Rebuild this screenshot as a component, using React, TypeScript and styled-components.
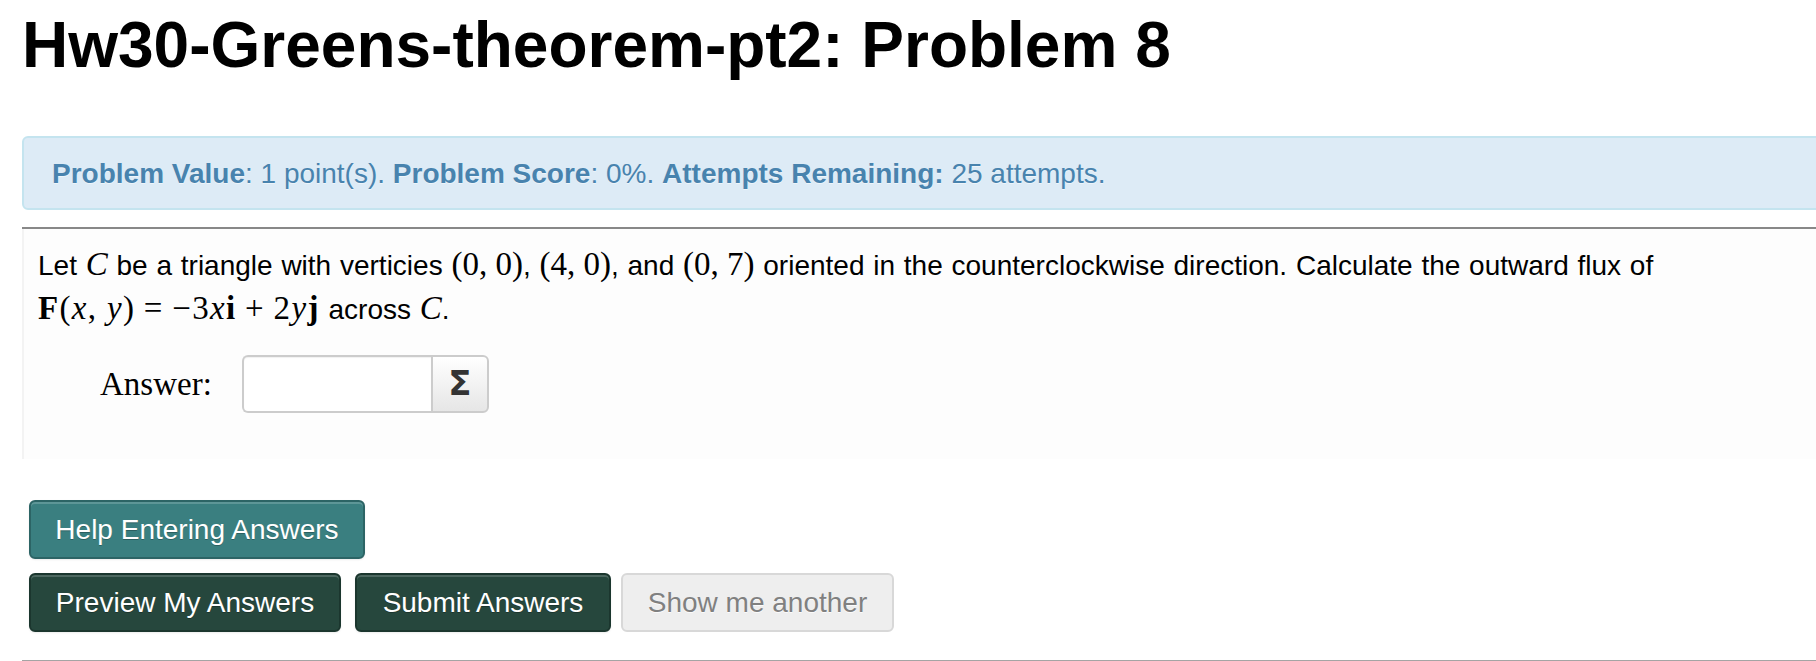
import styled, { createGlobalStyle } from 'styled-components';

const GlobalStyle = createGlobalStyle`
  html, body {
    margin: 0;
    padding: 0;
    background: #fff;
    overflow: hidden;
  }
  body {
    font-family: 'Liberation Sans', Arial, Helvetica, sans-serif;
    color: #000;
  }
`;

const Page = styled.div`
  padding-left: 22px;
  width: 1900px;
`;

const Heading = styled.h1`
  margin: 10px 0 56px;
  font-size: 64px;
  line-height: 70px;
  font-weight: 700;
`;

const Alert = styled.div`
  border: 2px solid #c4e4ef;
  border-radius: 6px;
  background: #ddebf6;
  color: #4883ae;
  padding: 16px 28px 15px;
  font-size: 28px;
  line-height: 39px;
  text-shadow: 0 1px 0 rgba(255, 255, 255, 0.5);
`;

const Rule = styled.hr<{ $light?: boolean }>`
  margin: 17px 0 0;
  border: 0;
  height: 2px;
  background: ${({ $light }) => ($light ? '#a4a4a4' : '#888')};
`;

const ProblemBody = styled.div`
  background: #fdfdfd;
  border-left: 2px solid #f3f3f3;
  padding: 14px 14px 46px;
  font-size: 28px;
  line-height: 42px;
  word-spacing: 1px;
`;

const Math = styled.span<{ $spread?: boolean }>`
  font-family: 'Liberation Serif', 'Times New Roman', serif;
  font-size: 33px;
  word-spacing: 0;
  letter-spacing: ${({ $spread }) => ($spread ? '0.04em' : '0')};
`;

const Var = styled.i`
  font-style: italic;
`;

const Bold = styled.b`
  font-weight: 700;
`;

const Op = styled.span`
  margin: 0 0.26em;
`;

const AnswerRow = styled.div`
  display: flex;
  align-items: center;
  margin-top: 24px;
  padding-left: 62px;
  gap: 30px;
`;

const Label = styled.span`
  font-family: 'Liberation Serif', 'Times New Roman', serif;
  font-size: 33px;
`;

const InputGroup = styled.div`
  display: flex;
  height: 58px;
`;

const Input = styled.input`
  width: 189px;
  box-sizing: border-box;
  border: 2px solid #ccc;
  border-right: 0;
  border-radius: 6px 0 0 6px;
  background: #fff;
  box-shadow: inset 0 1px 1px rgba(0, 0, 0, 0.06);
  outline: none;
`;

const SigmaButton = styled.button`
  width: 58px;
  box-sizing: border-box;
  border: 2px solid #ccc;
  border-radius: 0 6px 6px 0;
  background: linear-gradient(#fff, #e6e6e6);
  font-family: 'DejaVu Sans', sans-serif;
  font-weight: 700;
  font-size: 34px;
  line-height: 1;
  color: #333;
  padding: 0 0 2px;
`;

const Buttons = styled.div`
  padding: 41px 0 0 7px;
  display: flex;
  flex-direction: column;
  gap: 14px;
  margin-bottom: 28px;
`;

const ButtonRow = styled.div`
  display: flex;
  gap: 14px;
`;

type Variant = 'help' | 'primary' | 'disabled';

const palette: Record<Variant, { bg: string; border: string; color: string; shadow: string }> = {
  help: { bg: '#3a7f80', border: '#2c6465', color: '#fff', shadow: 'rgba(0,0,0,0.25)' },
  primary: { bg: '#26473d', border: '#1b362e', color: '#fff', shadow: 'rgba(0,0,0,0.25)' },
  disabled: { bg: '#eeeeee', border: '#d8d8d8', color: '#808080', shadow: 'rgba(255,255,255,0.8)' },
};

const Button = styled.button<{ $variant: Variant; $width: number }>`
  height: 59px;
  width: ${({ $width }) => $width}px;
  box-sizing: border-box;
  padding: 0;
  border-radius: 6px;
  font-family: 'Liberation Sans', Arial, sans-serif;
  font-size: 28px;
  background: ${({ $variant }) => palette[$variant].bg};
  border: 2px solid ${({ $variant }) => palette[$variant].border};
  color: ${({ $variant }) => palette[$variant].color};
  text-shadow: 0 1px 0 ${({ $variant }) => palette[$variant].shadow};
  box-shadow: ${({ $variant }) =>
    $variant === 'disabled'
      ? 'none'
      : 'inset 0 2px 0 rgba(255,255,255,0.18), 0 1px 2px rgba(0,0,0,0.08)'};
`;

export default function App() {
  return (
    <>
      <GlobalStyle />
      <Page>
        <Heading>Hw30-Greens-theorem-pt2: Problem 8</Heading>
        <Alert>
          <b>Problem Value</b>: 1 point(s). <b>Problem Score</b>: 0%. <b>Attempts Remaining:</b> 25
          attempts.
        </Alert>
        <Rule />
        <ProblemBody>
          Let <Math><Var>C</Var></Math> be a triangle with verticies <Math>(0, 0)</Math>,{' '}
          <Math>(4, 0)</Math>, and <Math>(0, 7)</Math> oriented in the counterclockwise direction.
          Calculate the outward flux of
          <br />
          <Math $spread>
            <Bold>F</Bold>(<Var>x</Var>, <Var>y</Var>)<Op>=</Op>−3<Var>x</Var>
            <Bold>i</Bold>
            <Op>+</Op>2<Var>y</Var>
            <Bold>j</Bold>
          </Math>{' '}
          across <Math><Var>C</Var></Math>.
          <AnswerRow>
            <Label>Answer:</Label>
            <InputGroup>
              <Input aria-label="answer" />
              <SigmaButton aria-label="equation editor">Σ</SigmaButton>
            </InputGroup>
          </AnswerRow>
        </ProblemBody>
        <Buttons>
          <ButtonRow>
            <Button $variant="help" $width={336}>Help Entering Answers</Button>
          </ButtonRow>
          <ButtonRow>
            <Button $variant="primary" $width={312}>Preview My Answers</Button>
            <Button $variant="primary" $width={256}>Submit Answers</Button>
            <Button $variant="disabled" $width={273} style={{ marginLeft: -4 }}>
              Show me another
            </Button>
          </ButtonRow>
        </Buttons>
        <Rule $light />
      </Page>
    </>
  );
}
